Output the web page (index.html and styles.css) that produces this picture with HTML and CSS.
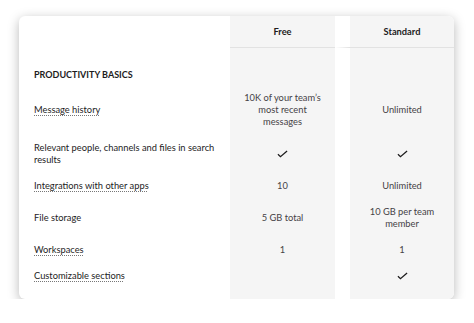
FILE: index.html
```html
<!DOCTYPE html>
<html lang="en">
<head>
    <meta charset="UTF-8">
    <meta name="viewport" content="width=device-width, initial-scale=1.0">
    <title>Plan comparison</title>
    <link rel="stylesheet" href="styles.css">
</head>
<body>
    <div class="card">
        <div class="grid">
            <!-- header -->
            <div class="cell label head"></div>
            <div class="cell plan head">Free</div>
            <div class="cell plan std head">Standard</div>

            <div class="cell label section">PRODUCTIVITY BASICS</div>
            <div class="cell plan section"></div>
            <div class="cell plan std section"></div>

            <div class="cell label"><span class="tip">Message history</span></div>
            <div class="cell plan">10K of your team’s<br>most recent<br>messages</div>
            <div class="cell plan std">Unlimited</div>

            <div class="cell label">Relevant people, channels and files in search results</div>
            <div class="cell plan"><svg class="check" viewBox="0 0 12 8"><path d="M1 4.2 L3.8 7 L11 0.8"/></svg></div>
            <div class="cell plan std"><svg class="check" viewBox="0 0 12 8"><path d="M1 4.2 L3.8 7 L11 0.8"/></svg></div>

            <div class="cell label"><span class="tip">Integrations with other apps</span></div>
            <div class="cell plan">10</div>
            <div class="cell plan std">Unlimited</div>

            <div class="cell label">File storage</div>
            <div class="cell plan">5 GB total</div>
            <div class="cell plan std">10 GB per team<br>member</div>

            <div class="cell label"><span class="tip">Workspaces</span></div>
            <div class="cell plan">1</div>
            <div class="cell plan std">1</div>

            <div class="cell label"><span class="tip">Customizable sections</span></div>
            <div class="cell plan"></div>
            <div class="cell plan std"><svg class="check" viewBox="0 0 12 8"><path d="M1 4.2 L3.8 7 L11 0.8"/></svg></div>

            <div class="cell label fill"></div>
            <div class="cell plan fill"></div>
            <div class="cell plan std fill"></div>
        </div>
    </div>
</body>
</html>
```

FILE: styles.css
```css
body {
    margin: 0;
    background: #fff;
    font-family: Lato, "Noto Sans", sans-serif;
    color: #1d1c1d;
}

.card {
    margin: 16px 0 0 19px;
    width: 435px;
    height: 283px;
    background: #fff;
    border-radius: 6px;
    overflow: hidden;
    box-shadow: 0 3px 12px rgba(0, 0, 0, 0.28);
}

.grid {
    display: grid;
    grid-template-columns: 211px 105px 119px;
    grid-template-rows: 32px repeat(7, auto) 1fr;
    height: 100%;
}

.cell {
    font-size: 9.3px;
    line-height: 12px;
    padding: 7px 0;
    display: flex;
    align-items: center;
}

.label {
    padding-left: 15px;
    padding-right: 8px;
}

.plan {
    background: #f5f5f5;
    background-clip: padding-box;
    text-align: center;
    color: #454245;
    justify-content: center;
}

.std {
    border-left: 15px solid #fff;
}

.head {
    padding: 0;
    font-weight: 700;
    color: #1d1c1d;
}

.plan.head {
    border-bottom: 1px solid #e2e2e2;
}

.plan.std.head {
    border-left: 15px solid #fff;
}

.section {
    padding: 21px 0 4px 15px;
    font-size: 9px;
    font-weight: 700;
    align-items: flex-end;
}

.plan.section {
    padding: 0;
}

.tip {
    text-decoration: underline dotted #777;
    text-underline-offset: 2px;
}

.check {
    width: 11px;
    height: 8px;
    fill: none;
    stroke: #1d1c1d;
    stroke-width: 1.4;
}

.fill {
    padding: 0;
}
```
